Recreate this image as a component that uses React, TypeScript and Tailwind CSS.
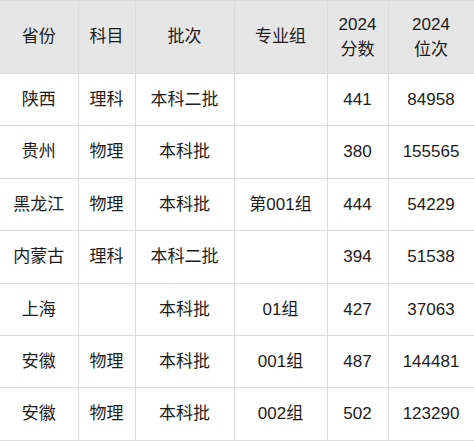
import React from "react";

type Row = {
  province: string;
  subject: string;
  batch: string;
  group: string;
  score: string;
  rank: string;
};

const rows: Row[] = [
  { province: "陕西", subject: "理科", batch: "本科二批", group: "", score: "441", rank: "84958" },
  { province: "贵州", subject: "物理", batch: "本科批", group: "", score: "380", rank: "155565" },
  { province: "黑龙江", subject: "物理", batch: "本科批", group: "第001组", score: "444", rank: "54229" },
  { province: "内蒙古", subject: "理科", batch: "本科二批", group: "", score: "394", rank: "51538" },
  { province: "上海", subject: "", batch: "本科批", group: "01组", score: "427", rank: "37063" },
  { province: "安徽", subject: "物理", batch: "本科批", group: "001组", score: "487", rank: "144481" },
  { province: "安徽", subject: "物理", batch: "本科批", group: "002组", score: "502", rank: "123290" },
];

const cell = "border border-[#dcdcdc] first:border-l-0 text-center align-middle p-0";

export default function App() {
  return (
    <div
      className="w-[474px] h-[441px] overflow-hidden bg-white text-[#1c1c1c] text-[17px]"
      style={{ fontFamily: '"Liberation Sans", "Noto Sans CJK SC", sans-serif' }}
    >
      <table className="w-[474px] border-collapse table-fixed">
        <colgroup>
          <col className="w-[78px]" />
          <col className="w-[57px]" />
          <col className="w-[99px]" />
          <col className="w-[93px]" />
          <col className="w-[61px]" />
          <col className="w-[86px]" />
        </colgroup>
        <thead>
          <tr className="h-[73px] bg-[#e6e6e6]">
            <th className={`${cell} font-normal`}>省份</th>
            <th className={`${cell} font-normal`}>科目</th>
            <th className={`${cell} font-normal`}>批次</th>
            <th className={`${cell} font-normal`}>专业组</th>
            <th className={`${cell} font-normal leading-[25px]`}>
              2024
              <br />
              分数
            </th>
            <th className={`${cell} font-normal leading-[25px]`}>
              2024
              <br />
              位次
            </th>
          </tr>
        </thead>
        <tbody>
          {rows.map((r, i) => (
            <tr key={i} className="h-[52.4px]">
              <td className={cell}>{r.province}</td>
              <td className={cell}>{r.subject}</td>
              <td className={cell}>{r.batch}</td>
              <td className={cell}>{r.group}</td>
              <td className={cell}>{r.score}</td>
              <td className={cell}>{r.rank}</td>
            </tr>
          ))}
        </tbody>
      </table>
    </div>
  );
}
